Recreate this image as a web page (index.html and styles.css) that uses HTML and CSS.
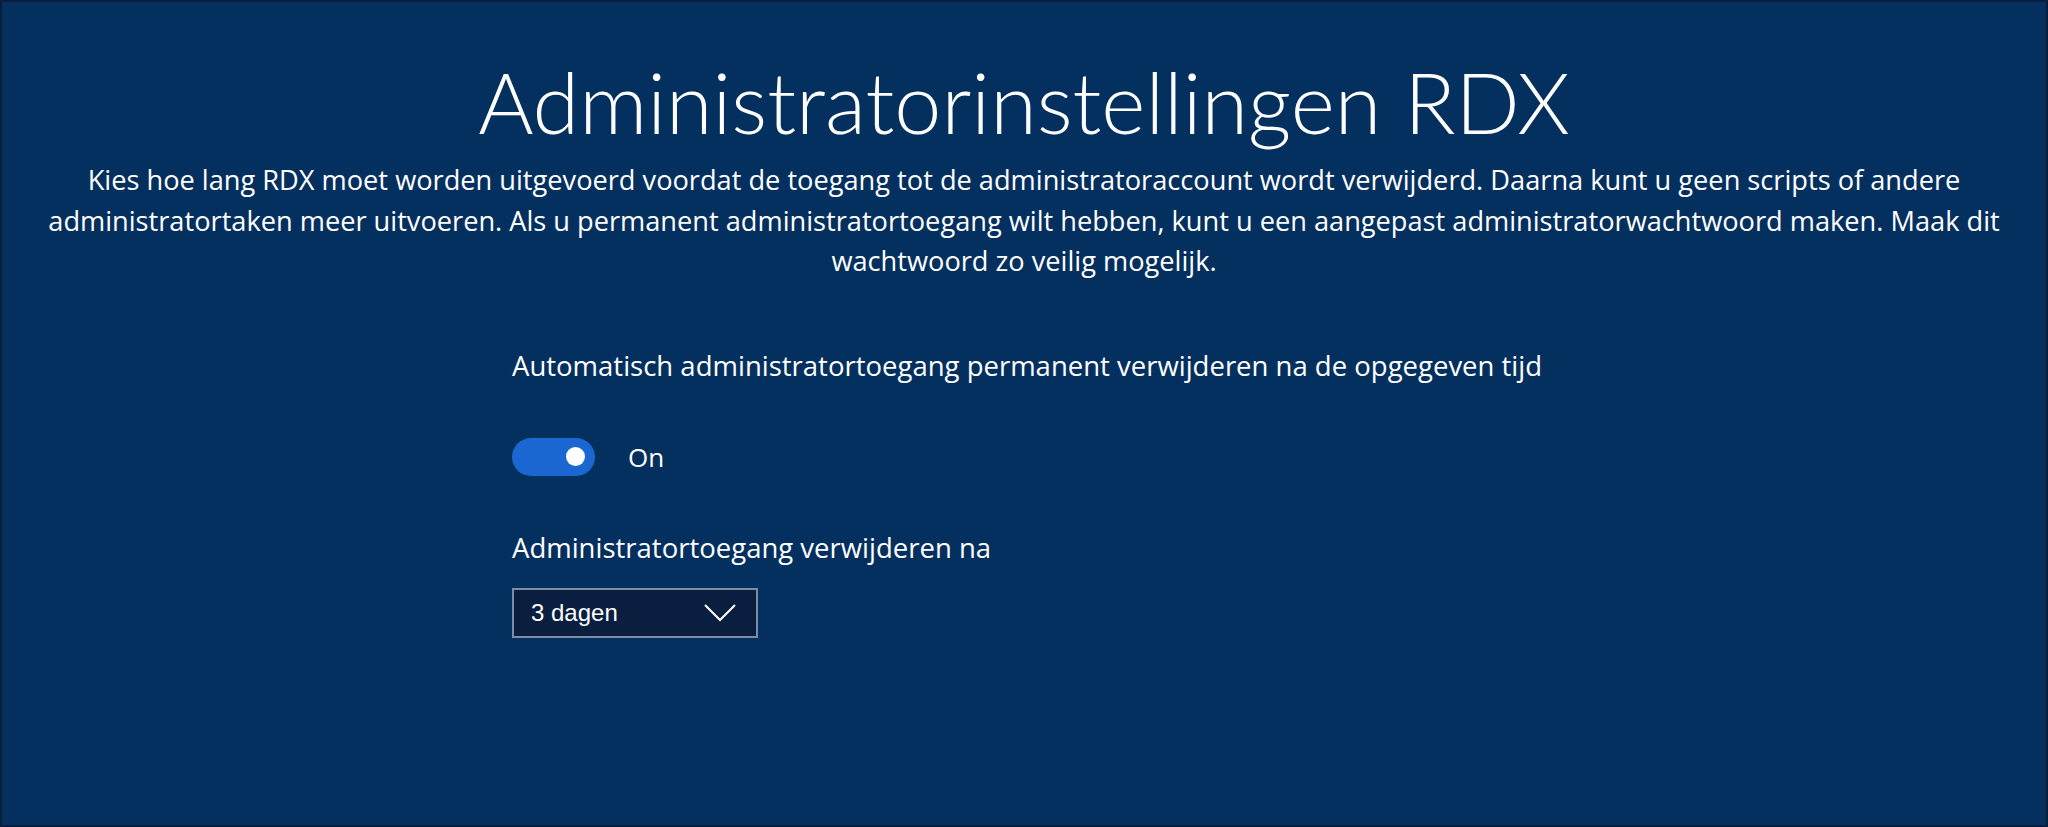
FILE: index.html
```html
<!DOCTYPE html>
<html lang="nl">
<head>
    <meta charset="UTF-8">
    <meta name="viewport" content="width=device-width, initial-scale=1.0">
    <title>Administratorinstellingen RDX</title>
    <link rel="stylesheet" href="styles.css">
</head>
<body>
    <div class="page">
        <header class="intro">
            <h1>Administratorinstellingen RDX</h1>
            <p class="description">Kies hoe lang RDX moet worden uitgevoerd voordat de toegang tot de administratoraccount wordt verwijderd. Daarna kunt u geen scripts of andere administratortaken meer uitvoeren. Als u permanent administratortoegang wilt hebben, kunt u een aangepast administratorwachtwoord maken. Maak dit wachtwoord zo veilig mogelijk.</p>
        </header>

        <div class="settings">
            <div class="setting">
                <label class="setting-label">Automatisch administratortoegang permanent verwijderen na de opgegeven tijd</label>
                <div class="toggle-row">
                    <span class="toggle on"><span class="knob"></span></span>
                    <span class="toggle-text">On</span>
                </div>
            </div>

            <div class="setting">
                <label class="setting-label">Administratortoegang verwijderen na</label>
                <div class="dropdown">
                    <span class="dropdown-value">3 dagen</span>
                    <svg class="chevron" width="32" height="18" viewBox="0 0 32 18">
                        <polyline points="1,1 16,16 31,1" fill="none" stroke="#ffffff" stroke-width="2"/>
                    </svg>
                </div>
            </div>
        </div>
    </div>
</body>
</html>
```

FILE: styles.css
```css
html, body {
    margin: 0;
    padding: 0;
}
body {
    width: 2048px;
    height: 827px;
    box-sizing: border-box;
    background-color: #04305f;
    border: 2px solid #0b1c3c;
    font-family: "Open Sans", "Noto Sans", sans-serif;
    color: white;
    overflow: hidden;
}
.page {
    padding-top: 48px;
}
.intro {
    text-align: center;
}
h1 {
    margin: 0;
    font-family: Lato, "Open Sans", sans-serif;
    font-weight: 300;
    font-size: 84.5px;
    line-height: 104px;
}
.description {
    margin: 6px auto 0;
    max-width: 1980px;
    font-size: 27.2px;
    line-height: 40.5px;
}
.settings {
    width: 1024px;
    margin: 66px auto 0;
}
.setting {
    margin-bottom: 54px;
}
.setting-label {
    display: block;
    font-size: 27.5px;
    line-height: 36px;
    white-space: nowrap;
}
.toggle-row {
    display: flex;
    align-items: center;
    gap: 33px;
    margin-top: 54px;
}
.toggle {
    width: 83px;
    height: 38px;
    border-radius: 19px;
    background-color: #1a67d2;
    display: flex;
    align-items: center;
    justify-content: flex-end;
    padding-right: 10px;
    box-sizing: border-box;
}
.knob {
    width: 19px;
    height: 19px;
    border-radius: 50%;
    background: white;
}
.toggle-text {
    font-size: 26px;
}
.dropdown {
    margin-top: 22px;
    width: 246px;
    height: 50px;
    box-sizing: border-box;
    border: 2px solid #7d8ca4;
    background-color: #0a1f3f;
    display: flex;
    align-items: center;
    justify-content: space-between;
    padding: 0 20px 0 17px;
}
.dropdown-value {
    font-family: "Liberation Sans", Arial, sans-serif;
    font-size: 24px;
}
.chevron {
    display: block;
}
```
